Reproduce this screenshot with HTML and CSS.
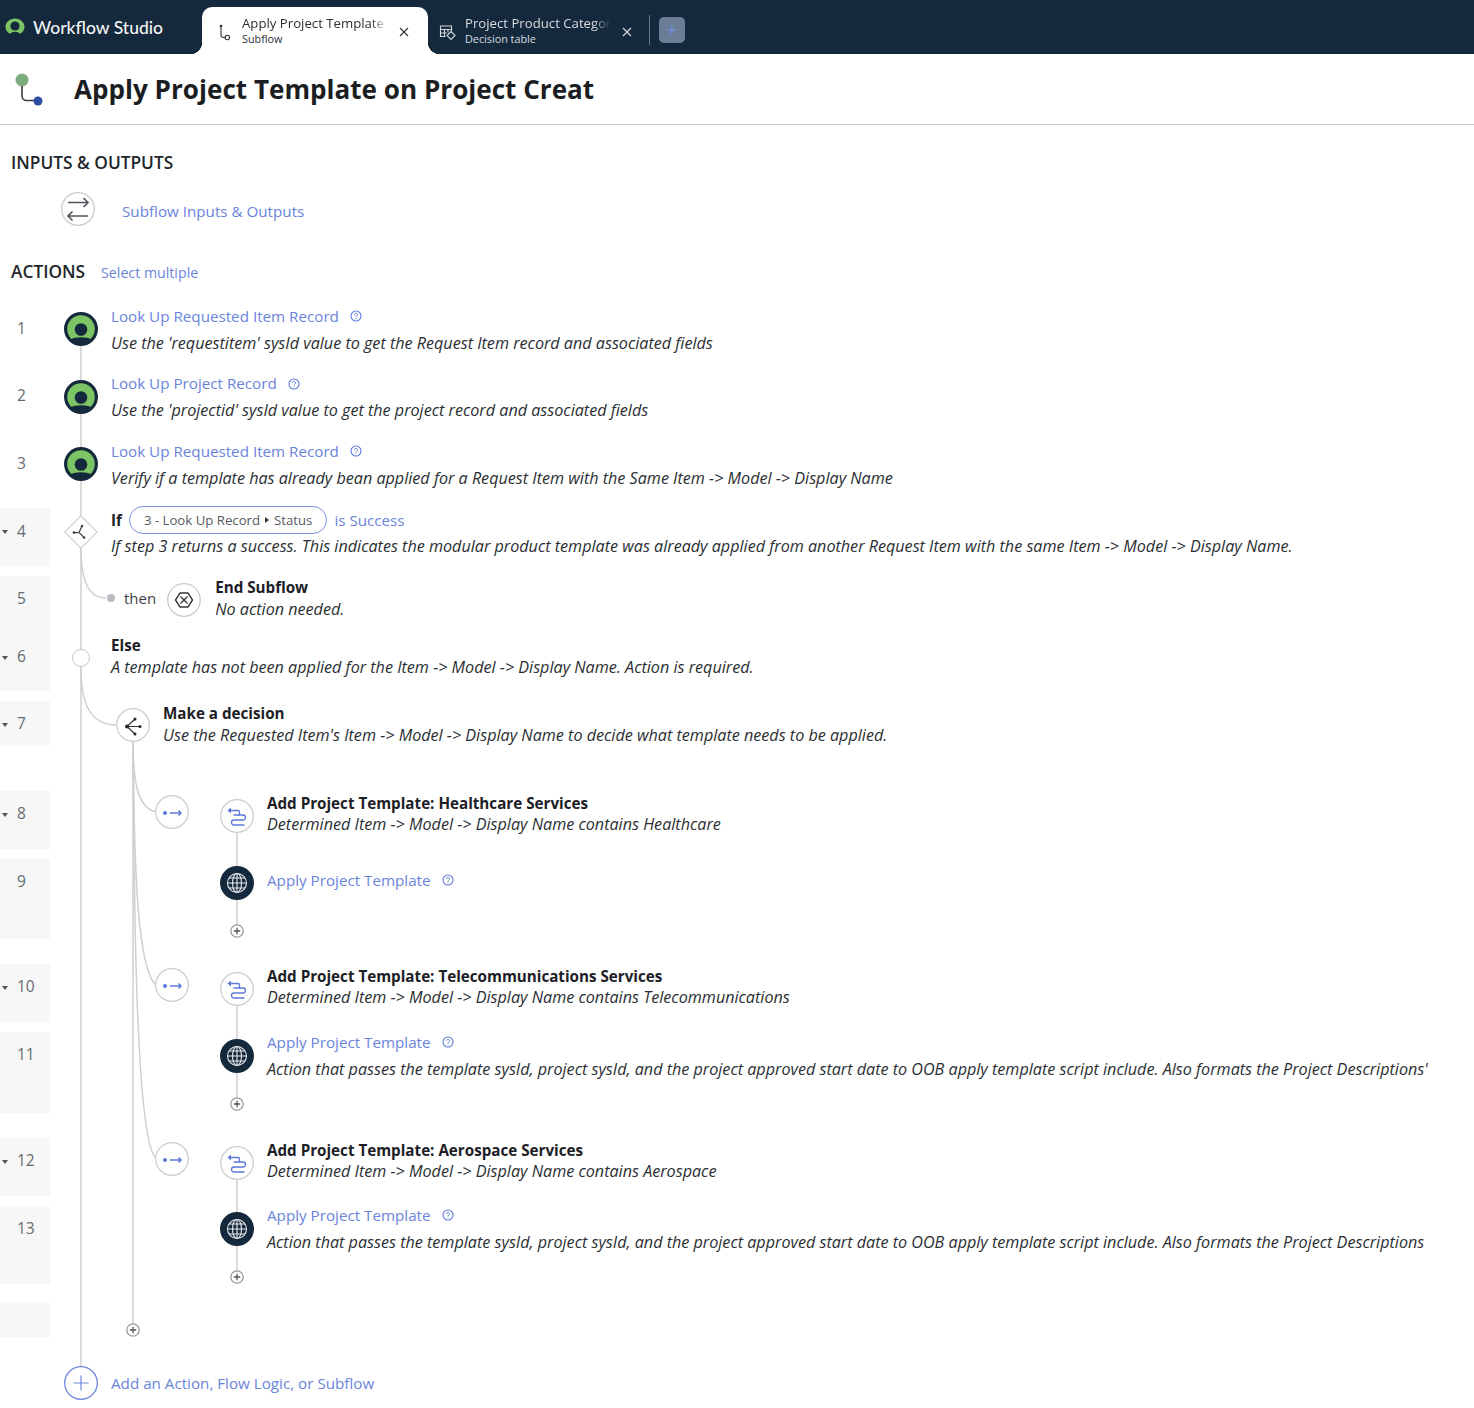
FILE: index.html
```html
<!DOCTYPE html>
<html lang="en">
<head>
<meta charset="utf-8">
<title>Workflow Studio</title>
<link rel="stylesheet" href="styles.css">
</head>
<body>
<svg class="defs" width="0" height="0" aria-hidden="true">
  <defs>
    <symbol id="i-now" viewBox="0 0 34 34">
      <circle cx="17" cy="17" r="17" fill="#15293c"/>
      <circle cx="17" cy="17" r="13.800" fill="#7cc464"/>
      <circle cx="17" cy="17.500" r="6.300" fill="#15293c"/>
      <path d="M6 27.500c3-1.600 7-2.300 11-2.300s8 .7 11 2.300l-3 4c-2 1-5 1.500-8 1.500s-6-.5-8-1.500z" fill="#15293c"/>
    </symbol>
    <symbol id="i-globe" viewBox="0 0 34 34">
      <circle cx="17" cy="17" r="17" fill="#15293c"/>
      <g fill="none" stroke="#e8ebee" stroke-width="1.100">
        <circle cx="17" cy="17" r="9.500"/>
        <ellipse cx="17" cy="17" rx="4.500" ry="9.500"/>
        <path d="M17 7.500v19M7.500 17h19M9 12h16M9 22h16"/>
      </g>
    </symbol>
    <symbol id="i-path" viewBox="0 0 34 34">
      <g fill="none" stroke="#5d78d8" stroke-width="1.300" stroke-linecap="round" stroke-linejoin="round">
        <path d="M10 11.500h8a1.500 1.500 0 0 1 1.500 1.500v3"/>
        <path d="M14 16h9a2.500 2.500 0 0 1 0 5h-9a2.500 2.500 0 0 0 0 5h10"/>
      </g>
      <path d="M7.500 11.500l3.500-3v6z" fill="#5d78d8"/>
    </symbol>
    <symbol id="i-help" viewBox="0 0 12 12">
      <circle cx="6" cy="6" r="5" fill="none" stroke="#5d78d8" stroke-width="1.100"/>
      <path d="M4.500 4.800a1.500 1.500 0 1 1 2.300 1.300c-.6.400-.8.600-.8 1.200M6 8.300v.8" fill="none" stroke="#5d78d8" stroke-width="1"/>
    </symbol>
    <symbol id="i-add" viewBox="0 0 14 14">
      <circle cx="7" cy="7" r="6.200" fill="#fff" stroke="#999" stroke-width="1.300"/>
      <path d="M7 3.800v6.400M3.800 7h6.400" stroke="#555" stroke-width="1.300"/>
    </symbol>
    <symbol id="i-branch" viewBox="0 0 34 34">
      <circle cx="10" cy="18" r="2" fill="#5d78d8"/>
      <path d="M15 18h11M23.500 15.500l2.500 2.500-2.500 2.500" fill="none" stroke="#5d78d8" stroke-width="1.500"/>
    </symbol>
  </defs>
</svg>

<svg class="wires" width="1474" height="1408" viewBox="0 0 1474 1408" aria-hidden="true">
  <g fill="none" stroke="#cfcfcf" stroke-width="1.500">
    <path d="M81 340V1366"/>
    <path d="M81 548c0 30 6 50 25 50"/>
    <path d="M81 668c0 34 8 57 36 57"/>
    <path d="M133 740V1324"/>
    <path d="M133 740c0 40 4 68 23 72"/>
    <path d="M133 740c1 110 3 228 23 245"/>
    <path d="M133 740c1 170 3 402 23 418"/>
    <path d="M237 830V925M237 1003V1098M237 1177V1271"/>
  </g>
  <circle cx="111" cy="598" r="4" fill="#b9bbc1"/>
</svg>

<header class="topbar">
  <div class="brand">
    <svg class="brand-logo" viewBox="0 0 20 17" aria-hidden="true">
      <path d="M5 15.800C2.300 14.400.5 11.800.5 8.700.5 4.200 4.700.5 10 .5s9.500 3.700 9.500 8.200c0 3.100-1.800 5.700-4.500 7.100-1.200-1.300-2.900-2-5-2s-3.800.7-5 2z" fill="#7cc464"/>
      <circle cx="10" cy="8" r="4.600" fill="#15293c"/>
    </svg>
    <span class="brand-name">Workflow Studio</span>
  </div>
  <div class="tab tab-active">
    <svg class="tab-icon" viewBox="0 0 16 18" aria-hidden="true">
      <circle cx="4" cy="3" r="1.300" fill="#333"/>
      <path d="M4 3v9a2.500 2.500 0 0 0 2.500 2.500H8" fill="none" stroke="#333" stroke-width="1.100"/>
      <circle cx="10.300" cy="14.500" r="2.200" fill="none" stroke="#333" stroke-width="1.100"/>
    </svg>
    <div class="tab-text">
      <div class="tab-title">Apply Project Template on</div>
      <div class="tab-sub">Subflow</div>
    </div>
    <svg class="tab-close" viewBox="0 0 10 10" aria-hidden="true"><path d="M1 1l8 8M9 1l-8 8" stroke="currentColor" stroke-width="1.100"/></svg>
  </div>
  <div class="tab tab-idle">
    <svg class="tab-icon" viewBox="0 0 18 18" aria-hidden="true">
      <g fill="none" stroke="#d5dae0" stroke-width="1.100">
        <path d="M1.500 3h11v5M1.500 3v10.500h5M1.500 6.500h11M1.500 10h6M5.500 6.500v7M9 6.500v3"/>
        <path d="M12 8.500l4 4-4 4-4-4z"/>
      </g>
    </svg>
    <div class="tab-text">
      <div class="tab-title">Project Product Category</div>
      <div class="tab-sub">Decision table</div>
    </div>
    <svg class="tab-close" viewBox="0 0 10 10" aria-hidden="true"><path d="M1 1l8 8M9 1l-8 8" stroke="currentColor" stroke-width="1.100"/></svg>
  </div>
  <span class="tab-sep"></span>
  <span class="tab-new">+</span>
</header>

<section class="titlebar">
  <svg class="title-icon" viewBox="0 0 32 36" aria-hidden="true">
    <circle cx="8" cy="10" r="6.500" fill="#7dab80"/>
    <path d="M8 16v10a4.500 4.500 0 0 0 4.500 4.500H20" fill="none" stroke="#3a3f45" stroke-width="1.600"/>
    <circle cx="24" cy="31" r="4.500" fill="#2d4fa3"/>
  </svg>
  <h1 class="page-title">Apply Project Template on Project Creat</h1>
</section>

<main class="main">
  <h2 class="section-head">INPUTS &amp; OUTPUTS</h2>
  <div class="io-row">
    <span class="node ring">
      <svg viewBox="0 0 34 34" aria-hidden="true">
        <g fill="none" stroke="#50545a" stroke-width="1.600">
          <path d="M7 10.500h20M22.500 6l4.500 4.500-4.500 4.500"/>
          <path d="M27 24H7M11.500 19.500L7 24l4.500 4.500"/>
        </g>
      </svg>
    </span>
    <a class="link io-link">Subflow Inputs &amp; Outputs</a>
  </div>
  <div class="actions-head">
    <h2 class="section-head">ACTIONS</h2>
    <a class="link link-small">Select multiple</a>
  </div>

  <div class="rows">
    <div class="row row-action">
      <div class="gut"><span class="num">1</span></div>
      <div class="cell cell-main">
        <svg class="node node-action"><use href="#i-now"/></svg>
        <div class="text text-action">
          <div class="line27"><a class="link">Look Up Requested Item Record</a><svg class="help"><use href="#i-help"/></svg></div>
          <div class="line27 desc">Use the 'requestitem' sysId value to get the Request Item record and associated fields</div>
        </div>
      </div>
    </div>
    <div class="row row-action">
      <div class="gut"><span class="num">2</span></div>
      <div class="cell cell-main">
        <svg class="node node-action"><use href="#i-now"/></svg>
        <div class="text text-action">
          <div class="line27"><a class="link">Look Up Project Record</a><svg class="help"><use href="#i-help"/></svg></div>
          <div class="line27 desc">Use the 'projectid' sysId value to get the project record and associated fields</div>
        </div>
      </div>
    </div>
    <div class="row row-action">
      <div class="gut"><span class="num">3</span></div>
      <div class="cell cell-main">
        <svg class="node node-action"><use href="#i-now"/></svg>
        <div class="text text-action">
          <div class="line27"><a class="link">Look Up Requested Item Record</a><svg class="help"><use href="#i-help"/></svg></div>
          <div class="line27 desc">Verify if a template has already bean applied for a Request Item with the Same Item -&gt; Model -&gt; Display Name</div>
        </div>
      </div>
    </div>

    <div class="row row-if">
      <div class="gut gut-low shaded"><span class="caret"></span><span class="num">4</span></div>
      <div class="cell cell-main">
        <svg class="node node-step" viewBox="0 0 34 34" aria-hidden="true">
          <path d="M17 .8L33.200 17 17 33.200 .8 17z" fill="#fff" stroke="#d2d2d2" stroke-width="1.300"/>
          <g fill="none" stroke="#44484d" stroke-width="1.300">
            <path d="M10 17.600h5l3-6.500M15 17.600l5 4.800"/>
          </g>
          <circle cx="10" cy="17.600" r="1.400" fill="#44484d"/><circle cx="18" cy="11" r="1.300" fill="#44484d"/><circle cx="20" cy="22.500" r="1.300" fill="#44484d"/>
        </svg>
        <div class="text text-if">
          <div class="if-line"><strong class="strong">If</strong><span class="pill">3 - Look Up Record <i class="tri"></i> Status</span><a class="link">is Success</a></div>
          <div class="line26 desc">If step 3 returns a success. This indicates the modular product template was already applied from another Request Item with the same Item -&gt; Model -&gt; Display Name.</div>
        </div>
      </div>
    </div>

    <div class="row row-then">
      <div class="gut shaded"><span class="num">5</span></div>
      <div class="cell cell-then">
        <span class="then">then</span>
        <span class="node node-step ring">
          <svg viewBox="0 0 34 34" aria-hidden="true">
            <path d="M13 10h8l4.500 7-4.500 7h-8l-4.500-7z" fill="none" stroke="#33373c" stroke-width="1.400"/>
            <path d="M13.500 13.500l7 7M20.500 13.500l-7 7" stroke="#33373c" stroke-width="1.400"/>
          </svg>
        </span>
        <div class="text">
          <div class="line22 strong">End Subflow</div>
          <div class="line22 desc">No action needed.</div>
        </div>
      </div>
    </div>

    <div class="row row-else">
      <div class="gut shaded"><span class="caret"></span><span class="num">6</span></div>
      <div class="cell cell-else">
        <span class="else-dot"></span>
        <div class="text">
          <div class="line22 strong">Else</div>
          <div class="line22 desc">A template has not been applied for the Item -&gt; Model -&gt; Display Name. Action is required.</div>
        </div>
      </div>
    </div>

    <div class="row row-decide">
      <div class="gut shaded"><span class="caret"></span><span class="num">7</span></div>
      <div class="cell cell-decide">
        <span class="node node-step ring">
          <svg viewBox="0 0 34 34" aria-hidden="true">
            <g fill="none" stroke="#33373c" stroke-width="1.200">
              <path d="M11 18.500l8-7.500M11 18.500h13M11 18.500l8 7.500"/>
            </g>
            <circle cx="11" cy="18.500" r="2" fill="#23272c"/><circle cx="19" cy="11" r="1.500" fill="#23272c"/><circle cx="24" cy="18.500" r="1.500" fill="#23272c"/><circle cx="19" cy="26" r="1.500" fill="#23272c"/>
          </svg>
        </span>
        <div class="text text-decide">
          <div class="line22 strong">Make a decision</div>
          <div class="line22 desc">Use the Requested Item's Item -&gt; Model -&gt; Display Name to decide what template needs to be applied.</div>
        </div>
      </div>
    </div>

    <div class="row row-case">
      <div class="gut shaded"><span class="caret"></span><span class="num">8</span></div>
      <div class="cell cell-case">
        <span class="node ring case-a"><svg><use href="#i-branch"/></svg></span>
        <span class="node ring case-b"><svg><use href="#i-path"/></svg></span>
        <div class="text text-case">
          <div class="line21 strong">Add Project Template: Healthcare Services</div>
          <div class="line21 desc">Determined Item -&gt; Model -&gt; Display Name contains Healthcare</div>
        </div>
      </div>
    </div>
    <div class="row row-sub row-sub-short">
      <div class="gut shaded"><span class="num">9</span></div>
      <div class="cell cell-sub">
        <div class="stack">
          <svg class="node"><use href="#i-globe"/></svg>
          <svg class="add-small"><use href="#i-add"/></svg>
        </div>
        <div class="text text-sub-first">
          <div class="line27"><a class="link">Apply Project Template</a><svg class="help"><use href="#i-help"/></svg></div>
        </div>
      </div>
    </div>

    <div class="row row-case">
      <div class="gut shaded"><span class="caret"></span><span class="num">10</span></div>
      <div class="cell cell-case">
        <span class="node ring case-a"><svg><use href="#i-branch"/></svg></span>
        <span class="node ring case-b"><svg><use href="#i-path"/></svg></span>
        <div class="text text-case">
          <div class="line21 strong">Add Project Template: Telecommunications Services</div>
          <div class="line21 desc">Determined Item -&gt; Model -&gt; Display Name contains Telecommunications</div>
        </div>
      </div>
    </div>
    <div class="row row-sub">
      <div class="gut shaded"><span class="num">11</span></div>
      <div class="cell cell-sub">
        <div class="stack">
          <svg class="node"><use href="#i-globe"/></svg>
          <svg class="add-small"><use href="#i-add"/></svg>
        </div>
        <div class="text text-sub">
          <div class="line27"><a class="link">Apply Project Template</a><svg class="help"><use href="#i-help"/></svg></div>
          <div class="line27 desc">Action that passes the template sysId, project sysId, and the project approved start date to OOB apply template script include. Also formats the Project Descriptions'</div>
        </div>
      </div>
    </div>

    <div class="row row-case">
      <div class="gut shaded"><span class="caret"></span><span class="num">12</span></div>
      <div class="cell cell-case">
        <span class="node ring case-a"><svg><use href="#i-branch"/></svg></span>
        <span class="node ring case-b"><svg><use href="#i-path"/></svg></span>
        <div class="text text-case">
          <div class="line21 strong">Add Project Template: Aerospace Services</div>
          <div class="line21 desc">Determined Item -&gt; Model -&gt; Display Name contains Aerospace</div>
        </div>
      </div>
    </div>
    <div class="row row-sub row-sub-last">
      <div class="gut shaded"><span class="num">13</span></div>
      <div class="cell cell-sub">
        <div class="stack">
          <svg class="node"><use href="#i-globe"/></svg>
          <svg class="add-small"><use href="#i-add"/></svg>
        </div>
        <div class="text text-sub">
          <div class="line27"><a class="link">Apply Project Template</a><svg class="help"><use href="#i-help"/></svg></div>
          <div class="line27 desc">Action that passes the template sysId, project sysId, and the project approved start date to OOB apply template script include. Also formats the Project Descriptions</div>
        </div>
      </div>
    </div>

    <div class="row row-end">
      <div class="gut shaded"></div>
      <div class="cell cell-end"><svg class="add-small"><use href="#i-add"/></svg></div>
    </div>

    <div class="row row-add">
      <div class="gut"></div>
      <div class="cell cell-main cell-add">
        <svg class="node" viewBox="0 0 34 34" aria-hidden="true">
          <circle cx="17" cy="17" r="16.300" fill="#fff" stroke="#6f88de" stroke-width="1.300"/>
          <path d="M17 9.500v15M9.500 17h15" stroke="#6f88de" stroke-width="1.200"/>
        </svg>
        <a class="link">Add an Action, Flow Logic, or Subflow</a>
      </div>
    </div>
  </div>
</main>
</body>
</html>
```

FILE: styles.css
```css
* { box-sizing: border-box; }
html, body { margin: 0; padding: 0; }
body {
  position: relative;
  height: 1408px;
  overflow: hidden;
  background: #fff;
  color: #1c2127;
  font-family: "Open Sans", "Noto Sans", sans-serif;
  font-size: 15px;
}
.defs { position: absolute; }
.wires { position: absolute; top: 0; left: 0; pointer-events: none; }

/* top bar */
.topbar {
  position: relative;
  display: flex;
  align-items: flex-start;
  height: 54px;
  background: #15293c;
  color: #fff;
}
.brand {
  display: flex;
  align-items: center;
  gap: 8px;
  width: 202px;
  height: 54px;
  padding-left: 5px;
}
.brand-logo { width: 20px; height: 17px; margin-top: -1px; }
.brand-name { font-family: Lato, "Open Sans", sans-serif; font-size: 17.500px; font-weight: 500; color: #f2f4f6; }
.tab {
  position: relative;
  display: flex;
  align-items: center;
  height: 47px;
  margin-top: 7px;
  font-size: 13px;
}
.tab-active {
  width: 226px;
  padding-left: 14px;
  background: #fff;
  color: #2a2f35;
  border-radius: 10px 10px 0 0;
}
.tab-active::before,
.tab-active::after {
  content: "";
  position: absolute;
  bottom: 0;
  width: 12px;
  height: 12px;
}
.tab-active::before { left: -12px; background: radial-gradient(circle at 0 0, transparent 12px, #fff 12.500px); }
.tab-active::after { right: -12px; background: radial-gradient(circle at 100% 0, transparent 12px, #fff 12.500px); }
.tab-idle { width: 223px; padding-left: 11px; color: #d8dde2; }
.tab-icon { flex: none; width: 18px; height: 18px; margin-right: 8px; margin-top: 3px; }
.tab-text { width: 146px; margin-top: -1px; }
.tab-title {
  overflow: hidden;
  white-space: nowrap;
  font-size: 13.200px;
  line-height: 17px;
  -webkit-mask-image: linear-gradient(90deg, #000 88%, transparent 100%);
  mask-image: linear-gradient(90deg, #000 88%, transparent 100%);
}
.tab-sub { font-size: 10.800px; line-height: 13px; }
.tab-close { flex: none; width: 10px; height: 10px; margin-left: 11px; margin-top: 3px; }
.tab-sep { width: 1px; height: 30px; margin: 15px 9px 0 -2px; background: #6a7988; }
.tab-new {
  width: 26px;
  height: 26px;
  margin-top: 17px;
  border-radius: 5px;
  background: #6c7e97;
  color: #7092e0;
  font-size: 18px;
  line-height: 25px;
  text-align: center;
}

/* title */
.titlebar {
  display: flex;
  align-items: center;
  height: 71px;
  padding-left: 14px;
  border-bottom: 1px solid #c8c8c8;
}
.title-icon { width: 32px; height: 36px; margin-top: -2px; }
.page-title { margin: 0 0 0 28px; font-size: 26.100px; font-weight: 700; line-height: 36px; color: #1a1e23; }

/* sections */
.main { padding: 0; }
.section-head { margin: 0; font-size: 17.300px; font-weight: 600; line-height: 24px; color: #22262b; }
.main > .section-head { margin: 26px 0 0 11px; }
.io-row { display: flex; align-items: center; gap: 27px; margin: 17px 0 0 61px; }
.io-link { margin-top: 4px; }
.actions-head { display: flex; align-items: baseline; gap: 16px; margin: 34px 0 0 11px; }
.link { color: #6a84dc; font-size: 15.200px; white-space: nowrap; }
.link-small { font-size: 14.200px; }
.node {
  position: relative;
  z-index: 1;
  display: block;
  flex: none;
  width: 34px;
  height: 34px;
}
.node svg { display: block; width: 100%; height: 100%; }
.ring { border: 0; border-radius: 50%; background: #fff; box-shadow: inset 0 0 0 1.300px #cdcdcd; }

/* rows */
.rows { margin-top: 21.500px; }
.row { display: grid; grid-template-columns: 50px 1fr; }
.gut {
  position: relative;
  padding: 11px 0 0 17px;
  font-size: 15.500px;
  line-height: 23px;
  color: #666b70;
}
.gut-low { padding-top: 12px; }
.shaded { background: #f7f7f7; }
.caret {
  position: absolute;
  top: 22px;
  left: 2px;
  border-top: 4px solid #555;
  border-left: 3.500px solid transparent;
  border-right: 3.500px solid transparent;
}
.row-action { height: 57.500px; margin-bottom: 10px; }
.row-if { height: 58px; margin: 10px 0 10px; }
.row-then { height: 58px; }
.row-else { height: 57px; margin-bottom: 10px; }
.row-decide { height: 44px; margin-bottom: 46px; }
.row-case { height: 58px; margin-bottom: 10px; }
.row-sub { height: 81px; margin-bottom: 25px; }
.row-sub-short { height: 80px; }
.row-sub-last { height: 77px; margin-bottom: 19px; }
.row-end { height: 34px; margin-bottom: 30px; }
.row-add { height: 34px; }

.cell { display: flex; align-items: flex-start; white-space: nowrap; }
.cell-main { padding-left: 14px; gap: 13px; }
.node-action { margin-top: 6.500px; }
.node-step { margin-top: 7px; }
.text { position: relative; z-index: 1; }
.text-action { margin-top: -3px; }
.text-if { margin-top: -1px; }
.line27 { display: flex; align-items: center; height: 27px; line-height: 27px; }
.line26 { height: 26px; line-height: 26px; }
.line22 { height: 22px; line-height: 22px; }
.line21 { height: 21px; line-height: 21px; }
.desc { font-style: italic; font-size: 16.150px; color: #2a2e33; }
.strong { font-weight: 700; font-size: 15.200px; color: #1c2026; }
.help { width: 12px; height: 12px; margin-left: 11px; }

.if-line { display: flex; align-items: center; height: 26px; }
.pill {
  display: flex;
  align-items: center;
  gap: 5px;
  height: 28px;
  margin: 0 7px 0 7px;
  padding: 0 14px;
  border: 1.300px solid #7a90dc;
  border-radius: 14px;
  background: #fff;
  font-size: 13.200px;
  color: #565a60;
}
.tri {
  border-left: 4px solid #333;
  border-top: 3.500px solid transparent;
  border-bottom: 3.500px solid transparent;
}
.cell-then { padding-left: 74px; }
.then { margin: 11px 11px 0 0; font-size: 15px; line-height: 23px; color: #3e4247; }
.cell-then .text { margin-left: 14px; }
.cell-else { padding-left: 22px; }
.else-dot {
  position: relative;
  z-index: 1;
  flex: none;
  width: 18px;
  height: 18px;
  margin: 15px 21px 0 0;
  border: 1.200px solid #c8c8c8;
  border-radius: 50%;
  background: #fff;
}
.cell-decide { padding-left: 66px; }
.text-decide { margin: 1px 0 0 13px; }
.cell-case { padding-left: 105px; }
.case-a { margin: 4px 31px 0 0; }
.case-b { margin-top: 8px; }
.text-case { margin: 1.500px 0 0 13px; }
.cell-sub { padding-left: 170px; }
.stack { display: flex; flex-direction: column; align-items: center; width: 34px; padding-top: 7px; }
.row-sub-last .stack { padding-top: 6px; }
.add-small { position: relative; z-index: 1; display: block; width: 14px; height: 14px; }
.stack .add-small { margin-top: 24px; }
.text-sub { margin: -3.500px 0 0 13px; }
.row-sub-last .text-sub { margin-top: -4.500px; }
.text-sub-first { margin: 7.500px 0 0 13px; }
.cell-end { padding: 21px 0 0 76px; }
.cell-add { align-items: center; }
```
